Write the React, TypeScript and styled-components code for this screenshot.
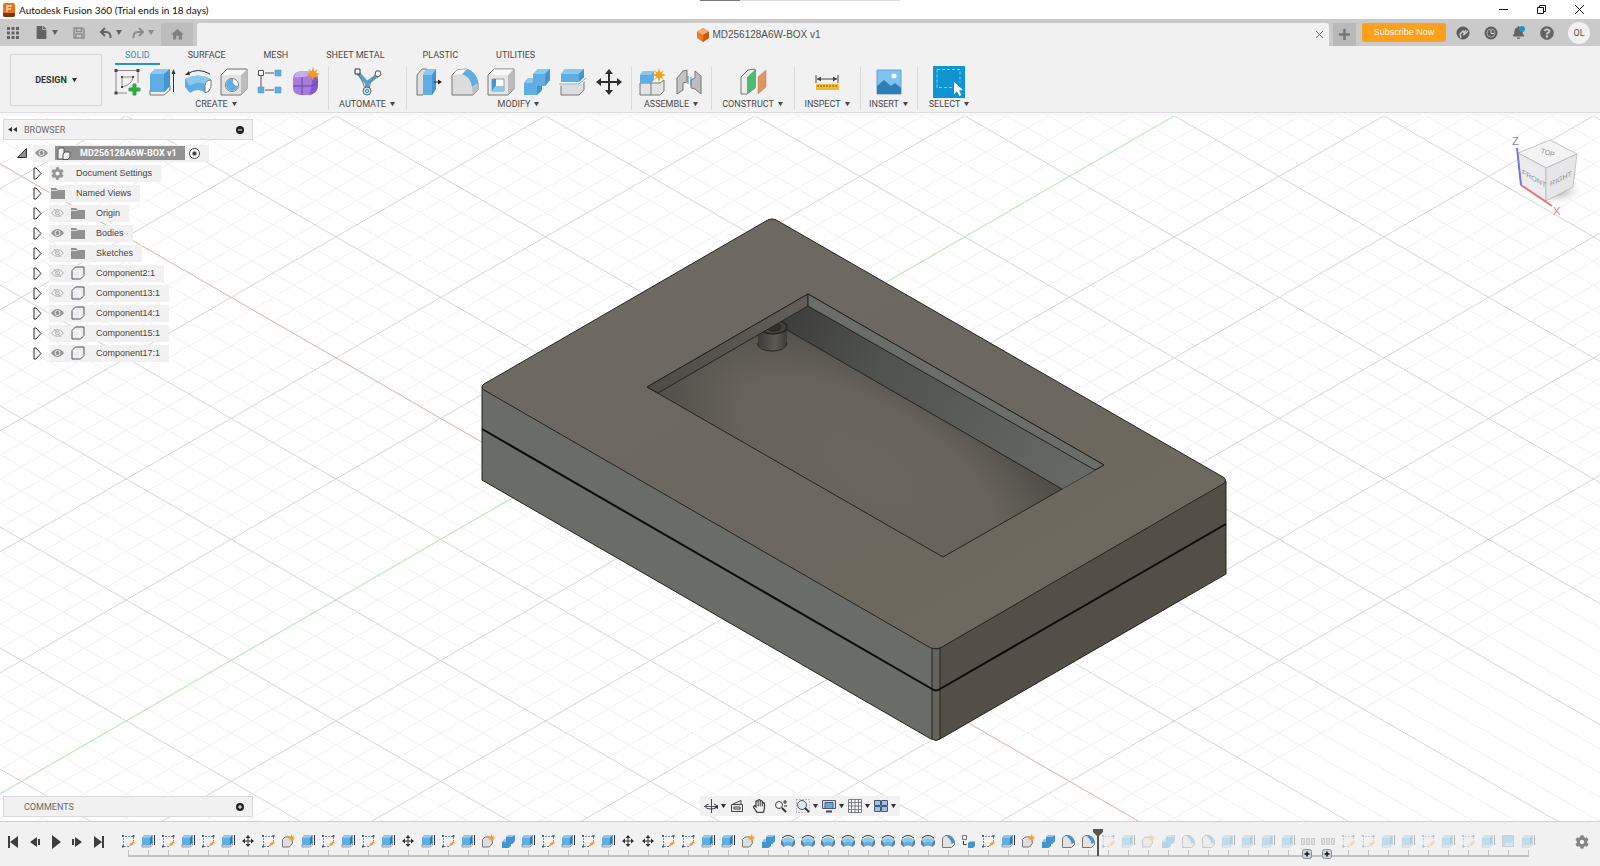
import React from "react";
import styled, { createGlobalStyle, css } from "styled-components";
import { FaCog, FaFile, FaQuestionCircle, FaBell, FaRegHandPaper } from "react-icons/fa";
import { MdHome } from "react-icons/md";

const GlobalStyle = createGlobalStyle`
  *, *::before, *::after { box-sizing: border-box; }
  body { margin: 0; background: #fff; color: #484848; font: 9px/12px Roboto, "Liberation Sans", sans-serif; }
  button { margin: 0; padding: 0; border: 0; background: none; color: inherit; font: inherit; cursor: pointer; }
  ul { margin: 0; padding: 0; list-style: none; }
  svg { display: block; flex: none; }
`;

const Page = styled.div`
  display: flex;
  flex-direction: column;
  min-height: 100vh;
  overflow: hidden;
`;

/* ---------- Window title bar ---------- */

const TitleBar = styled.header`
  position: relative;
  display: flex;
  align-items: center;
  gap: 4px;
  height: 19px;
  padding-left: 3px;
  background: #fff;
  color: #111;
`;

const EdgeMark = styled.span`
  position: absolute;
  top: 0;
  left: calc(50% - 100px);
  width: 200px;
  height: 1px;
  background: linear-gradient(90deg, #777 40px, #ddd 40px);
`;

const WindowTitle = styled.h1`
  flex: 1;
  margin: 0;
  font: 400 10px/18px Lato, "Open Sans", sans-serif;
`;

const WindowControls = styled.div`
  display: flex;
  padding-right: 2px;
`;

const WindowButton = styled.button`
  display: flex;
  align-items: center;
  justify-content: center;
  width: 38px;
  height: 17px;
`;

/* ---------- Document tab bar ---------- */

const TabBar = styled.div`
  display: flex;
  align-items: flex-end;
  height: 27px;
  background: #cacaca;
  color: #636363;
`;

const QuickAccess = styled.div`
  display: flex;
  align-items: center;
  width: 161px;
  height: 27px;
  padding-left: 7px;
`;

const QuickButton = styled.button<{ $gap?: number; $dim?: boolean }>`
  display: flex;
  align-items: center;
  gap: 4px;
  margin-right: ${(p) => p.$gap ?? 0}px;
  opacity: ${(p) => (p.$dim ? 0.6 : 1)};
`;

const HomeTab = styled.button`
  display: flex;
  align-items: center;
  justify-content: center;
  width: 32px;
  height: 23px;
  margin-right: 4px;
  background: #bcbcbc;
  color: #808080;
`;

const DocumentTab = styled.div`
  display: flex;
  flex: 1;
  align-items: center;
  height: 23px;
  padding-left: 12px;
  border-radius: 3px 3px 0 0;
  background: #f1f1f1;
`;

const DocumentName = styled.span`
  display: flex;
  flex: 1;
  align-items: center;
  justify-content: center;
  gap: 3px;
  font: 10px/23px "Liberation Sans", Arial, sans-serif;
  color: #505050;
`;

const CloseTab = styled.button`
  display: flex;
  align-items: center;
  justify-content: center;
  width: 20px;
  height: 23px;
`;

const NewTab = styled(CloseTab)`
  width: 23px;
  margin: 0 6px 0 4px;
  background: #b9b9b9;
`;

const SubscribeButton = styled.button`
  align-self: center;
  width: 84px;
  height: 19px;
  border-radius: 2px;
  background: #fba11c;
  color: #fff8e8;
  font: 9px/19px "Liberation Sans", Arial, sans-serif;
`;

const AccountArea = styled.div`
  display: flex;
  align-items: center;
  align-self: center;
  gap: 14px;
  padding: 0 10px;
`;

const RoundButton = styled.button`
  position: relative;
  display: flex;
  width: 14px;
  height: 14px;
`;

const NewsDot = styled.i`
  position: absolute;
  top: 0;
  right: 1px;
  width: 6px;
  height: 6px;
  border-radius: 50%;
  background: #1c93d2;
`;

const Avatar = styled.button`
  width: 22px;
  height: 22px;
  border-radius: 50%;
  background: #f1f1f1;
  color: #555;
  text-align: center;
`;

/* ---------- Ribbon ---------- */

const Ribbon = styled.div`
  display: flex;
  height: 70px;
  border-bottom: 3px solid #f8f8f8;
  background: #f1f1f1;
  box-shadow: inset 0 -1px 0 #dcdcdc;
`;

const WorkspaceButton = styled.button`
  width: 92px;
  height: 52px;
  margin: 8px 2px 0 10px;
  border: 1px solid #d6d6d6;
  border-radius: 2px;
  box-shadow: 0 0 1px #ccc;
  color: #333;
  font-weight: 700;
`;

const RibbonBody = styled.div`
  display: flex;
  flex: 1;
  flex-direction: column;
`;

const RibbonTabs = styled.nav`
  display: flex;
  gap: 18px;
  padding-left: 11px;
`;

const RibbonTab = styled.button<{ $active?: boolean }>`
  height: 19px;
  padding: 1px 10px 0;
  border-bottom: 2px solid transparent;
  ${(p) => p.$active && css`
    border-color: #2793c1;
    color: #2b90be;
  `}
`;

const RibbonGroups = styled.div`
  display: flex;
  padding-top: 2px;
`;

const RibbonGroup = styled.section<{ $width: number }>`
  display: flex;
  flex-direction: column;
  align-items: center;
  width: ${(p) => p.$width}px;
  height: 43px;
  & + & { box-shadow: inset 1px 0 0 #dadada; }
`;

const ToolRow = styled.div`
  display: flex;
  gap: 4px;
  height: 33px;
`;

const ToolButton = styled.button<{ $selected?: boolean }>`
  display: flex;
  align-items: center;
  justify-content: center;
  width: 32px;
  height: 32px;
  margin-top: -1px;
  background: ${(p) => (p.$selected ? "#0e93d3" : "none")};
`;

const MenuLabel = styled.button`
  display: flex;
  align-items: center;
  gap: 4px;
  white-space: nowrap;
`;

const WorkspaceLabel = styled.span`
  display: flex;
  align-items: center;
  justify-content: center;
  gap: 5px;
`;

/* ---------- Viewport and its overlays ---------- */

const Viewport = styled.main`
  position: relative;
  flex: 1;
  min-height: 420px;
  background: #fff;
`;

const Scene = styled.svg`
  position: absolute;
  inset: 0;
  width: 100%;
  height: 100%;
`;

const BrowserPanel = styled.aside`
  position: absolute;
  top: 3px;
  left: 3px;
  width: 250px;
`;

const PanelBar = styled.div`
  display: flex;
  align-items: center;
  height: 21px;
  padding: 0 8px 0 4px;
  border: 1px solid #dadada;
  background: #f1f1f1;
  color: #686868;
`;

const PanelTitle = styled.span<{ $indent: number }>`
  flex: 1;
  padding-left: ${(p) => p.$indent}px;
`;

const CommentsPanel = styled(PanelBar)`
  position: absolute;
  bottom: 4px;
  left: 3px;
  width: 250px;
`;

const Tree = styled.ul`
  padding-top: 3px;
`;

const TreeRow = styled.li<{ $root?: boolean }>`
  display: flex;
  align-items: center;
  gap: 5px;
  height: 20px;
  padding-left: ${(p) => (p.$root ? 12 : 28)}px;
`;

const Expander = styled.button`
  display: flex;
  align-items: center;
  justify-content: center;
  width: 13px;
  height: 16px;
`;

const RowBody = styled.div`
  display: flex;
  align-items: center;
  height: 17px;
  padding: 0 9px 0 2px;
  background: rgba(240, 240, 240, 0.93);
  color: #444;
`;

const IconCell = styled.button`
  display: flex;
  align-items: center;
  width: 20px;
  color: #969696;
`;

const RowText = styled.span`
  padding-left: 5px;
  font: 9px/16px "Liberation Sans", Arial, sans-serif;
`;

const RootTag = styled.span`
  display: flex;
  align-items: center;
  gap: 9px;
  height: 14px;
  margin-right: 4px;
  padding: 0 8px 0 2px;
  background: #929292;
  color: #fff;
  font: 700 9px/14px Roboto, "Liberation Sans", sans-serif;
`;

const ActiveRadio = styled.input`
  appearance: none;
  width: 11px;
  height: 11px;
  margin: 0;
  border: 1px solid #444;
  border-radius: 50%;
  background: radial-gradient(circle, #333 0 1px, #fff 3px);
`;

const CubeHolder = styled.div`
  position: absolute;
  top: 16px;
  right: 12px;
`;

const NavBar = styled.div`
  position: absolute;
  bottom: 5px;
  left: 50%;
  display: flex;
  align-items: center;
  height: 20px;
  padding-left: 4px;
  background: #f1f1f1;
  color: #333;
  transform: translateX(-50%);
`;

const NavButton = styled.button<{ $menu?: boolean }>`
  display: flex;
  align-items: center;
  gap: 3px;
  width: ${(p) => (p.$menu ? 26 : 22)}px;
`;

/* ---------- Timeline ---------- */

const TimelineBar = styled.footer`
  display: flex;
  align-items: flex-start;
  height: 45px;
  padding-left: 4px;
  border-top: 1px solid #cfcfcf;
  background: #f1f1f1;
`;

const Playback = styled.div`
  display: flex;
  gap: 1px;
  margin: 12px 10px 0 0;
`;

const PlayButton = styled.button`
  display: flex;
  align-items: center;
  justify-content: center;
  width: 20px;
  height: 16px;
  color: #3d3d3d;
`;

const Track = styled.div`
  padding-top: 12px;
`;

const Steps = styled.ul`
  display: flex;
`;

const Step = styled.li`
  position: relative;
  width: 20px;
  height: 16px;
`;

const StepButton = styled.button<{ $dim: boolean }>`
  display: flex;
  justify-content: center;
  width: 20px;
  opacity: ${(p) => (p.$dim ? 0.32 : 1)};
`;

const Rail = styled.div`
  height: 7px;
  margin: 0 9px 0 10px;
  border-bottom: 2px solid #c2c2c2;
  background: repeating-linear-gradient(90deg, #c2c2c2 0 1px, transparent 1px 20px);
`;

const Marker = styled.svg`
  position: absolute;
  top: -6px;
  left: -5px;
`;

const GroupBadge = styled.svg`
  position: absolute;
  top: 15px;
  left: 4px;
`;

const SettingsButton = styled.button`
  display: flex;
  margin: 13px 11px 0 auto;
  color: #858585;
`;

/* ---------- Drawings ---------- */

const BLUE = "#5fade3";
const DEEP = "#4394d0";
const PALE = "#8cc7ee";
const EDGE = "#777";

const star = "M0-7 1.4-2.6 5-5 2.7-1.4 7 0 2.7 1.4 5 5 1.4 2.6 0 7-1.4 2.6-5 5-2.7 1.4-7 0-2.7-1.4-5-5-1.4-2.6Z";

const toolArt: Record<string, React.ReactNode> = {
  sketch: (
    <>
      <path d="M4 25V2.500H26V15M4 25H15" fill="none" stroke="#8a8a8a" />
      <path d="M10 19V9h11q-1 8-11 10Z" fill="none" stroke="#8a8a8a" />
      <path d="M2.500 1h3v3h-3zM24.500 1h3v3h-3zM2.500 23.500h3v3h-3zM9 8h2v2H9zM20 8h2v2h-2zM9 18h2v2H9z" fill="#444" />
      <path d="M21 16h3v4h4v3h-4v4h-3v-4h-4v-3h4z" fill="#36a545" stroke="#36a545" />
    </>
  ),
  extrude: (
    <>
      <path d="M2 22v5h14l6-5v-4" fill="#eee" stroke={EDGE} />
      <path d="M2 6 7 1H22V18L16 24H2Z" fill={BLUE} />
      <path d="M2 6 7 1H22L16 6Z" fill={PALE} />
      <path d="M16 6 22 1V18L16 24Z" fill={DEEP} />
      <path d="M25.500 24V4" stroke="#333" />
      <path d="m25.500 1 2 5h-4z" fill="#333" />
    </>
  ),
  revolve: (
    <>
      <path d="M1 11Q14 4 27 11L22 18V25Q14 19 6 25L1 19Z" fill={BLUE} />
      <path d="M1 11Q14 4 27 11L22 17Q14 12 6 18Z" fill={PALE} />
      <path d="M21 17Q22 12 27 12V19Q26 24 21 25Z" fill="#fff" stroke={EDGE} />
      <path d="M3 6Q14-1 26 6" fill="none" stroke="#333" />
      <path d="m1 7 4-4 1 4z" fill="#333" />
    </>
  ),
  hole: (
    <>
      <path d="M1 7 7 1H27V21L21 27H1Z" fill="#e2e2e2" stroke={EDGE} />
      <path d="M21 7V27L27 21V1Z" fill="#bdbdbd" />
      <path d="M2 7 7 2H26L21 7Z" fill="#f6f6f6" />
      <circle cx="12" cy="17" r="6.500" fill="#fff" stroke={EDGE} />
      <path d="M13 11A6 6 0 1 0 18 18Q12 18 13 11Z" fill={BLUE} />
    </>
  ),
  pattern: (
    <>
      <path d="M5 8V19M9 5H18M9 22H18" stroke="#555" />
      <path d="M2.500 2.500h5v5h-5z" fill="#fff" stroke="#555" />
      <path d="M19 2h6v6h-6zM2 19h6v6H2zM19 19h6v6h-6z" fill={BLUE} stroke={DEEP} strokeWidth=".5" />
    </>
  ),
  form: (
    <>
      <path d="M1 11Q1 4 9 3H20Q26 4 26 11V18Q25 26 17 27H8Q1 26 1 20Z" fill="#a77be0" />
      <path d="M2 10Q3 4 9 3H20Q17 9 10 9Q4 9 2 10Z" fill="#c9acf0" />
      <path d="M20 9Q26 8 26 11V18Q25 26 17 27Q20 20 20 9Z" fill="#8458c4" />
      <path d="M10 9V27M1 18H19Q24 17 26 13" fill="none" stroke="#6b41a8" />
      <path d={star} fill="#f59a1d" transform="translate(21 6)" />
    </>
  ),
  automate: (
    <>
      <path d="M4 4 14 15 25 7M14 15V23" fill="none" stroke="#5d9fc6" strokeWidth="4" />
      <path d="M6 7q5 9 6 14M22 8q-6 6-6 13" fill="none" stroke="#6e7b85" />
      <path d="M2 1h5v5H2z" fill="#fff" stroke="#333" />
      <path d="m22 7 1-4h4l1 4-3 2z" fill="#fff" stroke="#555" />
      <circle cx="14" cy="23" r="4" fill="#cfe3ef" stroke="#4d6f85" />
      <circle cx="14" cy="23" r="1.500" fill="#fff" stroke="#4d6f85" />
    </>
  ),
  press: (
    <>
      <path d="M2 7 7 1H12V21L8 27H2Z" fill="#ddd" stroke={EDGE} />
      <path d="M8 7 12 1H21V21L17 27H8Z" fill={BLUE} />
      <path d="M8 7 12 1H21L17 7Z" fill={PALE} />
      <path d="M17 7 21 1V21L17 27Z" fill={DEEP} />
      <path d="M19 14H25" stroke="#222" />
      <path d="m27 14-4-2.500v5z" fill="#222" />
    </>
  ),
  fillet: (
    <>
      <path d="M1 7 6 2 15 1Q25 4 27 16V22L22 27H1Z" fill="#dcdcdc" stroke={EDGE} />
      <path d="M11 6 16 1Q26 4 27 15L21 19Q20 9 11 6Z" fill={BLUE} />
      <path d="M2 7 6 2 16 1 11 6Z" fill="#f8f8f8" />
      <path d="M21 20 27 16V22L22 27Z" fill="#bdbdbd" />
    </>
  ),
  shell: (
    <>
      <path d="M1 7 7 1H27V21L21 27H1Z" fill="#e6e6e6" stroke={EDGE} />
      <path d="M21 7 27 1V21L21 27Z" fill="#bbb" />
      <path d="M2 7 7 1.500H26L21 7Z" fill="#f8f8f8" />
      <path d="M5 11H17V23H5Z" fill="#fff" stroke="#999" />
      <path d="M5 11H9V18L5 23Z" fill={DEEP} />
      <path d="M9 18H17V23H5Z" fill={PALE} />
    </>
  ),
  combine: (
    <>
      <path d="M10 6 15 1H27V12L22 18H19V22L14 27H1V15L5 10H10Z" fill={BLUE} />
      <path d="M10 6 15 1H27L22 6ZM1 15 5 10H10V15Z" fill={PALE} />
      <path d="M22 6 27 1V12L22 18ZM14 18H19V22L14 27Z" fill={DEEP} />
    </>
  ),
  split: (
    <>
      <path d="M2 17H20L25 13V22L20 27H2Z" fill="#dedede" stroke={EDGE} />
      <path d="M2 6 6 1H25V10L20 14H2Z" fill={BLUE} />
      <path d="M2 6 6 1H25L20 6Z" fill={PALE} />
      <path d="M20 6 25 1V10L20 14Z" fill={DEEP} />
      <path d="M0 16H20L27 10" fill="none" stroke="#fff" strokeWidth="3" />
      <path d="M0 16H20L27 10" fill="none" stroke={BLUE} />
    </>
  ),
  move: (
    <>
      <path d="M14 4V24M4 14H24" stroke="#2d2d2d" strokeWidth="2" />
      <path d="m14 1 4 5h-8zM14 27l-4-5h8zM1 14l5-4v8zM27 14l-5 4v-8z" fill="#2d2d2d" />
    </>
  ),
  component: (
    <>
      <path d="M1 15H21L25 12V23L21 27H1Z" fill="#e3e3e3" stroke={EDGE} />
      <path d="M12 15V27" stroke={EDGE} />
      <path d="M1 7 4 3H15V12L12 15H1Z" fill={BLUE} />
      <path d="M1 7 4 3H15L12 7Z" fill={PALE} />
      <path d={star} fill="#eba21e" transform="translate(20 7)" />
    </>
  ),
  joint: (
    <>
      <path d="M2 10 8 3 12 2V14L8 15V22L2 26Z" fill="#c4c4c4" stroke={EDGE} />
      <path d="M16 12 20 10V3L26 8V26L20 21 16 20Z" fill="#bcbcbc" stroke={EDGE} />
      <path d="M13 8V16M16 9V17" stroke="#4193cd" />
    </>
  ),
  plane: (
    <>
      <path d="M2 9 9 2 16 1V20L8 26H2Z" fill="#ededed" stroke={EDGE} />
      <path d="M8 9 17 1V19L8 26Z" fill="#4dbb77" />
      <path d="M19 9 27 2V19L19 26Z" fill="#df9566" stroke="#c77d50" strokeWidth=".5" />
    </>
  ),
  measure: (
    <>
      <path d="M3 7V15M25 7V15M4 11H24" stroke="#444" />
      <path d="m4 11 4-2.500v5zM24 11l-4-2.500v5z" fill="#444" />
      <path d="M3 16H26V22H3Z" fill="#f2b93b" />
      <path d="M5 17v2M8 17v2M11 17v2M14 17v2M17 17v2M20 17v2M23 17v2" stroke="#7d5a12" />
    </>
  ),
  insert: (
    <>
      <path d="M2 2H26V26H2Z" fill="#7fc3f2" stroke="#6aa2c6" />
      <circle cx="19" cy="8" r="2.500" fill="#fff" />
      <path d="M2 18 9 12 16 18 20 15 26 20V26H2Z" fill="#2e7fb5" />
    </>
  ),
  select: (
    <>
      <path d="M2 1.500H25V15M2 1.500V19.500H18" fill="none" stroke="#7fd6f6" strokeDasharray="3 2" />
      <path d="M19 14 28 22 24 22.500 26.500 27 24.500 28 22 23.500 19 26Z" fill="#fff" />
    </>
  ),
};

function ToolArt({ name, size = 28 }: { name: string; size?: number }) {
  return <svg width={size} height={size} viewBox="0 0 28 28" overflow="visible" aria-hidden="true">{toolArt[name]}</svg>;
}

const stepArt: Record<string, React.ReactNode> = {
  S: (
    <>
      <path d="M2.500 1V12.500H8M1 2.500H12.500V7" fill="none" stroke="#8b8b8b" strokeDasharray="2 1" />
      <path d="M1 1h2v2H1zM11.500 1h2v2h-2zM1 11.500h2v2H1z" fill="#2f6a97" />
      <path d="m8 12 1-2.500 3.500-2.500 1.500 1.500L11 11.500z" fill="#eba14c" />
    </>
  ),
  E: (
    <>
      <path d="M1 10V13H9L11.500 11V8" fill="#eee" stroke="#777" strokeWidth=".7" />
      <path d="M1 4 3.500 1H11.500V8.500L9 11.500H1Z" fill={BLUE} />
      <path d="M1 4 3.500 1H11.500L9 4Z" fill={PALE} />
      <path d="M9 4 11.500 1V8.500L9 11.500Z" fill="#2f7db8" />
      <path d="M13.500 1V11" stroke="#333" />
    </>
  ),
  M: (
    <>
      <path d="M7 2V12M2 7H12" stroke="#333" />
      <path d="m7 1 2.500 3h-5zM7 13 4.500 10h5zM1 7l3-2.500v5zM13 7l-3 2.500v-5z" fill="#333" />
    </>
  ),
  N: (
    <>
      <path d="M1.500 5.500 4 3H9Q11.500 5 11.500 9L8.500 13H1.500Z" fill="#dedede" stroke="#777" />
      <path d={star} fill="#f5a22d" transform="translate(10.500 4) scale(.6)" />
    </>
  ),
  J: (
    <>
      <path d="M5 3 7.500 1H14V7L11.500 10H10V12L7.500 14H1V8L3 5.500H5Z" fill={DEEP} />
      <path d="M5 3 7.500 1H14L11.500 3ZM1 8 3 5.500H5V8Z" fill={PALE} />
    </>
  ),
  R: (
    <>
      <path d="M0 6Q7 1 14 6V10L11.500 13Q7 10 2.500 13L0 10Z" fill={BLUE} />
      <path d="M0 6Q7 1 14 6L11 9Q7 6 3 9Z" fill={PALE} />
      <path d="M1 4Q7-1 13 4" fill="none" stroke="#333" />
      <path d="M11.500 9 14 6V10L11.500 13ZM2.500 13V9L0 6V10Z" fill="#777" />
    </>
  ),
  C: (
    <>
      <path d="M1.500 4 4 1.500H7Q13 3 13.500 9V10.500L10.500 13.500H1.500Z" fill="#e2e2e2" stroke="#777" />
      <path d="M6 3 8 1Q13 3 13.500 8.500L10.500 10Q10 5 6 3Z" fill={DEEP} />
    </>
  ),
  X: (
    <>
      <path d="M1.500 1.500h4v4h-4z" fill="#eee" stroke="#777" />
      <path d="M2.500 7v3.500h3" fill="none" stroke="#333" />
      <path d="M7 9 9 7.500H14V12L12 14H7Z" fill={DEEP} />
    </>
  ),
  P: <path d="M.5 4.500h3v6h-3zM5.500 4.500h3v6h-3zM10.500 4.500h3v6h-3z" fill="#bbb" stroke="#777" />,
  I: (
    <>
      <path d="M1.500 1.500H12.500V12.500H1.500Z" fill="#58aae2" stroke="#888" />
      <path d="M2 12 6 8 9 10 12 7V12Z" fill="#9fd0f0" />
    </>
  ),
};

const stepNames: Record<string, string> = {
  S: "Sketch", E: "Extrude", M: "Move", N: "New component", J: "Combine",
  R: "Revolve", C: "Fillet", X: "Align", P: "Pattern", I: "Canvas",
};

const STEPS = "SESESEMSNESESEMESENJES" + "ESEMMSSEENJRRRRRRRRCXSENJCC" + "SENJCCEEEEPPSSEESESEIE";
const MARKER_AT = 49;

function Eye({ hidden }: { hidden?: boolean }) {
  return hidden ? (
    <svg width="13" height="10" viewBox="0 0 13 10">
      <path d="M.5 5Q6.500-2 12.500 5 6.500 12 .5 5ZM3 1 10 9" fill="none" stroke="#b2b2b2" />
      <circle cx="6.500" cy="5" r="2" fill="none" stroke="#b2b2b2" />
    </svg>
  ) : (
    <svg width="13" height="10" viewBox="0 0 13 10">
      <path d="M0 5Q6.500-3 13 5 6.500 13 0 5Z" fill="#949494" />
      <circle cx="6.500" cy="5" r="2.500" fill="#949494" stroke="#eee" />
    </svg>
  );
}

function BodyIcon() {
  return (
    <svg width="14" height="14" viewBox="0 0 14 14">
      <path d="M1 4.500 4.500 1H13V9.500L9.500 13H1Z" fill="#ebebf1" stroke="#555" strokeLinejoin="round" />
      <path d="M2 5H9V12" fill="none" stroke="#fff" />
    </svg>
  );
}

const gridSteps = Array.from({ length: 80 }, (_, i) => i - 35);
const PERIOD = 209.6;
const SLOPE = 0.5774;

function gridPath(keep: (i: number) => boolean) {
  return gridSteps
    .filter(keep)
    .map((i) => {
      const down = -83 + (i * PERIOD) / 5;
      const up = 1174 + ((i - 15) * PERIOD) / 5;
      const run = 710 / SLOPE;
      return `M${down} 116L${down + run} 826M${up} 116L${up - run} 826`;
    })
    .join("");
}

function Model() {
  return (
    <Scene viewBox="0 116 1600 705" preserveAspectRatio="xMidYMid slice" role="img" aria-label="Enclosure model">
      <defs>
        <linearGradient id="top" x1="0" y1="0" x2="1" y2="1">
          <stop offset="0" stopColor="#6e6a61" />
          <stop offset=".5" stopColor="#6c675f" />
          <stop offset="1" stopColor="#6e6a5e" />
        </linearGradient>
        <radialGradient id="floor" gradientUnits="userSpaceOnUse" cx="0" cy="0" r="1" gradientTransform="translate(868 470) rotate(31) scale(265 118)">
          <stop offset="0" stopColor="#6b665e" />
          <stop offset=".55" stopColor="#67635a" />
          <stop offset="1" stopColor="#4b4943" />
        </radialGradient>
        <linearGradient id="wall" gradientUnits="userSpaceOnUse" x1="790" y1="320" x2="1090" y2="480">
          <stop offset="0" stopColor="#3f403d" />
          <stop offset=".3" stopColor="#50524e" />
          <stop offset="1" stopColor="#686a66" />
        </linearGradient>
        <linearGradient id="lip" gradientUnits="userSpaceOnUse" x1="647" y1="387" x2="808" y2="300">
          <stop offset="0" stopColor="#4e4b45" />
          <stop offset="1" stopColor="#625e57" />
        </linearGradient>
        <linearGradient id="post">
          <stop offset="0" stopColor="#3c3b37" />
          <stop offset=".6" stopColor="#5b5952" />
          <stop offset="1" stopColor="#3c3b37" />
        </linearGradient>
      </defs>
      <path d={gridPath((i) => i % 5 !== 0)} stroke="#f1f1f1" fill="none" />
      <path d={gridPath((i) => i % 5 === 0)} stroke="#d6d6d6" fill="none" />
      <path d="M-83 116 1147 826" stroke="#efb9b9" />
      <path d="M1174 116-56 826" stroke="#b4f2b4" />
      <g stroke="#24231f" strokeLinejoin="round">
        <path d="M482 387V480L931 739H935V648Z" fill="#6a6c67" />
        <path d="M1226 481V574L940 739H935V648Z" fill="#534e46" />
        <path d="M766 221Q772 217 778 221L1223 477Q1228 480 1223 484L942 647Q935 651 929 647L484 390Q480 387 484 384Z" fill="url(#top)" />
        <path d="M932 648V739Q936 742 940 739V648Q936 650 932 648Z" fill="#64645e" />
        <path d="M482 429 932 689Q936 692 940 689L1226 524" fill="none" stroke="#0c0c0b" strokeWidth="2" />
        <path d="M808 294 1104 465 943 557 647 387Z" fill="url(#floor)" />
        <path d="M808 306 1095 470 1062 489 787 330 774 326Z" fill="url(#wall)" stroke="none" />
        <path d="M787 330 1062 489" />
        <path d="M758 328V345Q772 357 787 345V328Z" fill="url(#post)" stroke="none" />
        <path d="M757 343Q759 351 772 351T787 343" fill="none" />
        <ellipse cx="773" cy="327" rx="14" ry="7" fill="#42413d" strokeWidth="1.500" />
        <ellipse cx="774" cy="327" rx="7" ry="4" fill="#32312e" />
        <path d="M808 294V306L658 393 647 387Z" fill="url(#lip)" />
        <path d="M808 294 1104 465 1095 470 808 306Z" fill="#6b6d69" />
      </g>
    </Scene>
  );
}

function ViewCube() {
  return (
    <svg width="78" height="92" viewBox="1510 132 78 92" role="img" aria-label="View cube" fontFamily="Liberation Sans, Arial, sans-serif">
      <defs>
        <radialGradient id="cubeShade">
          <stop offset="0" stopColor="#9a9a9a" />
          <stop offset="1" stopColor="#fff" stopOpacity="0" />
        </radialGradient>
      </defs>
      <ellipse cx="1556" cy="191" rx="30" ry="15" fill="url(#cubeShade)" />
      <g stroke="#b0b0b0" strokeWidth=".7" strokeLinejoin="round">
        <path d="M1518 153 1550 140 1577 154 1546 168Z" fill="#f3f3f3" />
        <path d="M1518 153 1546 168V201L1521 186Z" fill="#ececee" />
        <path d="M1577 154 1546 168V201L1573 187Z" fill="#e6e6e8" />
      </g>
      <path d="M1517 148 1521 185" stroke="#7479d0" strokeWidth="2" />
      <path d="M1521 185 1552 206" stroke="#e27a7a" strokeWidth="2" />
      <g fill="#909093" fontSize="7" textAnchor="middle">
        <text transform="translate(1547 155) rotate(18)">TOP</text>
        <text transform="translate(1534 181) skewY(30)">FRONT</text>
        <text transform="translate(1561 181) skewY(-27)">RIGHT</text>
      </g>
      <text x="1512" y="145" fontSize="11" fill="#7d80c8">Z</text>
      <text x="1553" y="215" fontSize="11" fill="#e88080">X</text>
    </svg>
  );
}

/* ---------- Data ---------- */

const ribbonTabs = ["SOLID", "SURFACE", "MESH", "SHEET METAL", "PLASTIC", "UTILITIES"];

const ribbonGroups: { label: string; width: number; tools: string[] }[] = [
  { label: "CREATE", width: 224, tools: ["sketch", "extrude", "revolve", "hole", "pattern", "form"] },
  { label: "AUTOMATE", width: 78, tools: ["automate"] },
  { label: "MODIFY", width: 225, tools: ["press", "fillet", "shell", "combine", "split", "move"] },
  { label: "ASSEMBLE", width: 80, tools: ["component", "joint"] },
  { label: "CONSTRUCT", width: 83, tools: ["plane"] },
  { label: "INSPECT", width: 66, tools: ["measure"] },
  { label: "INSERT", width: 57, tools: ["insert"] },
  { label: "SELECT", width: 64, tools: ["select"] },
];

type Kind = "settings" | "folder" | "body";
const treeRows: { name: string; kind: Kind; eye?: "on" | "off" }[] = [
  { name: "Document Settings", kind: "settings" },
  { name: "Named Views", kind: "folder" },
  { name: "Origin", kind: "folder", eye: "off" },
  { name: "Bodies", kind: "folder", eye: "on" },
  { name: "Sketches", kind: "folder", eye: "off" },
  { name: "Component2:1", kind: "body", eye: "off" },
  { name: "Component13:1", kind: "body", eye: "off" },
  { name: "Component14:1", kind: "body", eye: "on" },
  { name: "Component15:1", kind: "body", eye: "off" },
  { name: "Component17:1", kind: "body", eye: "on" },
];

const kindIcon: Record<Kind, React.ReactNode> = {
  settings: <FaCog size={13} />,
  folder: (
    <svg width="14" height="12" viewBox="0 0 14 12">
      <path d="M0 1H5L7 3H14V12H0Z" fill="#919191" />
      <path d="M0 3.500H6L8 2" fill="none" stroke="#ddd" />
    </svg>
  ),
  body: <BodyIcon />,
};

const playback: [string, string][] = [
  ["Go to start", "M1 1h2v12H1zM11 1v12L3 7z"],
  ["Step back", "M9 2v10L2 7zM10 4h2v6h-2z"],
  ["Play", "M3 0v14l9-7z"],
  ["Step forward", "M5 2v10l7-5zM2 4h2v6H2z"],
  ["Go to end", "M11 1h2v12h-2zM3 1v12l8-6z"],
];

const navTools: { name: string; menu?: boolean; art: React.ReactNode }[] = [
  { name: "Orbit", menu: true, art: <><path d="M7.500 0V14" stroke="#444" /><path d="M5 5Q1 6 1 7.500 2 10 7 10T13 7.500Q13 6 10 5" fill="none" stroke="#445" /><path d="M0 7.500H14" stroke="#555" /><path d="m10 8 4-2v4z" fill="#333" /></> },
  { name: "Look at", art: <path d="M1.500 5.500h11v7h-11zM3 5l8-3.500V5M4 8h6v2H4z" fill="#e5e5e5" stroke="#444" /> },
  { name: "Pan", art: <FaRegHandPaper size={14} color="#444" /> },
  { name: "Zoom", art: <><circle cx="5" cy="6" r="3.500" fill="#eef4fb" stroke="#444" /><path d="m8 9 4 4" stroke="#333" strokeWidth="2" /><path d="M9 3h4M11 1v4M10 7h3" stroke="#333" /></> },
  { name: "Zoom window", menu: true, art: <><path d="M.5.500h13v13H.5z" fill="none" stroke="#888" strokeDasharray="1 2" /><circle cx="6" cy="6" r="4.500" fill="#dbe9f4" stroke="#556" /><path d="m9 9 4 4" stroke="#333" strokeWidth="2" /></> },
  { name: "Display settings", menu: true, art: <><path d="M.5 1.500h13v8H.5z" fill="#d5dce5" stroke="#556" /><path d="M3 3.500h8v6H3z" fill="#78a0cf" stroke="#3f5f88" /><path d="M4 12.500h6" stroke="#445" strokeWidth="2" /></> },
  { name: "Grid and snaps", menu: true, art: <path d="M.5.500h13v13H.5zM3.500 0v14M7 0v14M10.500 0v14M0 3.500h14M0 7h14M0 10.500h14" fill="#f7f7fa" stroke="#667" strokeWidth=".8" /> },
  { name: "Viewports", menu: true, art: <path d="M.5 1.500h6v5h-6zM7.500 1.500h6v5h-6zM.5 7.500h6v5h-6zM7.500 7.500h6v5h-6z" fill="#a3bfe0" stroke="#40597d" /> },
];

/* ---------- Application ---------- */

function Caret({ size = 5 }: { size?: number }) {
  return <svg width={size} height={size} viewBox="0 0 6 6"><path d="M0 0h6L3 5z" fill="currentColor" /></svg>;
}

function Header() {
  return (
    <>
      <TitleBar>
        <EdgeMark />
        <svg width="12" height="14" viewBox="0 0 12 14">
          <rect width="12" height="14" rx="2" fill="#e8731c" />
          <path d="M0 10H12V12Q12 14 10 14H2Q0 14 0 12Z" fill="#7e3410" />
          <path d="M4 9V3H8.500M4 6H8" fill="none" stroke="#ffe2c4" strokeWidth="1.500" />
        </svg>
        <WindowTitle>Autodesk Fusion 360 (Trial ends in 18 days)</WindowTitle>
        <WindowControls>
          <WindowButton aria-label="Minimize"><svg width="9" height="9"><path d="M0 4.500H9" stroke="#111" /></svg></WindowButton>
          <WindowButton aria-label="Restore"><svg width="9" height="9"><path d="M.5 2.500h6v6h-6zM2.500 2.500v-2h6v6h-2" fill="none" stroke="#111" /></svg></WindowButton>
          <WindowButton aria-label="Close"><svg width="9" height="9"><path d="m0 0 9 9M9 0 0 9" stroke="#111" /></svg></WindowButton>
        </WindowControls>
      </TitleBar>
      <TabBar>
        <QuickAccess>
          <QuickButton aria-label="Data panel" $gap={16}>
            <svg width="12" height="12"><path d="M0 0h3v3H0zM4.500 0h3v3h-3zM9 0h3v3H9zM0 4.500h3v3H0zM4.500 4.500h3v3h-3zM9 4.500h3v3H9zM0 9h3v3H0zM4.500 9h3v3h-3zM9 9h3v3H9z" fill="currentColor" /></svg>
          </QuickButton>
          <QuickButton aria-label="File" $gap={15}><FaFile size={13} /><Caret size={6} /></QuickButton>
          <QuickButton aria-label="Save" $gap={15} $dim>
            <svg width="12" height="12"><path d="M1 1H9.500L11 2.500V11H1ZM3.500 1V4.500H8.500V1M3 11V7H9V11" fill="none" stroke="currentColor" strokeWidth="1.500" /></svg>
          </QuickButton>
          <QuickButton aria-label="Undo" $gap={10}>
            <svg width="12" height="12"><path d="M1 5H6Q11 5 10.500 11M5 1 1 5 5 9" fill="none" stroke="currentColor" strokeWidth="2" /></svg><Caret size={6} />
          </QuickButton>
          <QuickButton aria-label="Redo" $dim>
            <svg width="12" height="12"><path d="M11 5H6Q1 5 1.500 11M7 1 11 5 7 9" fill="none" stroke="currentColor" strokeWidth="2" /></svg><Caret size={6} />
          </QuickButton>
        </QuickAccess>
        <HomeTab aria-label="Home"><MdHome size={15} /></HomeTab>
        <DocumentTab>
          <DocumentName>
            <svg width="12" height="14" viewBox="0 0 12 14">
              <path d="M6 0 12 3.500V10L6 14 0 10V3.500Z" fill="#ec7b27" />
              <path d="M6 0 12 3.500 6 7 0 3.500Z" fill="#f7ac6b" />
              <path d="M6 7 12 3.500V10L6 14Z" fill="#c95a12" />
            </svg>
            MD256128A6W-BOX v1
          </DocumentName>
          <CloseTab aria-label="Close document"><svg width="7" height="7"><path d="m0 0 7 7M7 0 0 7" stroke="#666" /></svg></CloseTab>
        </DocumentTab>
        <NewTab aria-label="New document"><svg width="11" height="11"><path d="M5.500 0V11M0 5.500H11" stroke="#757575" strokeWidth="2.500" /></svg></NewTab>
        <SubscribeButton>Subscribe Now</SubscribeButton>
        <AccountArea>
          <RoundButton aria-label="Extensions">
            <svg width="14" height="14"><circle cx="7" cy="7" r="6.500" fill="#5b5b5b" /><path d="M5 12 4 8 7 5 8 7 10 4M7 9 9 8 12 5" fill="none" stroke="#cacaca" strokeWidth="1.500" /></svg>
          </RoundButton>
          <RoundButton aria-label="Job status">
            <svg width="14" height="14"><circle cx="7" cy="7" r="6.500" fill="#5b5b5b" /><circle cx="7" cy="7" r="4" fill="none" stroke="#aaa" /><path d="M7 4V7.500H10" fill="none" stroke="#ddd" /></svg>
          </RoundButton>
          <RoundButton aria-label="Notifications"><FaBell size={13} /><NewsDot /></RoundButton>
          <RoundButton aria-label="Help"><FaQuestionCircle size={14} /></RoundButton>
          <Avatar aria-label="Account">OL</Avatar>
        </AccountArea>
      </TabBar>
      <Ribbon>
        <WorkspaceButton><WorkspaceLabel>DESIGN<Caret /></WorkspaceLabel></WorkspaceButton>
        <RibbonBody>
          <RibbonTabs>
            {ribbonTabs.map((t, i) => <RibbonTab key={t} $active={i === 0}>{t}</RibbonTab>)}
          </RibbonTabs>
          <RibbonGroups>
            {ribbonGroups.map((g) => (
              <RibbonGroup key={g.label} $width={g.width}>
                <ToolRow>
                  {g.tools.map((t) => (
                    <ToolButton key={t} aria-label={t} $selected={t === "select"}><ToolArt name={t} /></ToolButton>
                  ))}
                </ToolRow>
                <MenuLabel>{g.label}<Caret /></MenuLabel>
              </RibbonGroup>
            ))}
          </RibbonGroups>
        </RibbonBody>
      </Ribbon>
    </>
  );
}

function Browser() {
  return (
    <BrowserPanel>
      <PanelBar>
        <svg width="9" height="7"><path d="M4 1V6L0 3.500ZM9 1V6L5 3.500Z" fill="#333" /></svg>
        <PanelTitle $indent={7}>BROWSER</PanelTitle>
        <svg width="8" height="8"><circle cx="4" cy="4" r="4" fill="#222" /><path d="M2 4H6" stroke="#fff" /></svg>
      </PanelBar>
      <Tree>
        <TreeRow $root>
          <Expander aria-label="Collapse document"><svg width="10" height="10"><path d="M9.500.5V9.500H.5Z" fill="#8f8f8f" stroke="#333" /></svg></Expander>
          <RowBody>
            <IconCell aria-label="Toggle document visibility"><Eye /></IconCell>
            <RootTag>
              <svg width="14" height="13" viewBox="0 0 14 13">
                <path d="M1 2.500 3 1H7V12H1Z" fill="#f4f4f4" stroke="#555" />
                <path d="M6 7 8 5H13V10L11 12.500H6Z" fill="#f4f4f4" stroke="#555" />
              </svg>
              MD256128A6W-BOX v1
            </RootTag>
            <ActiveRadio type="radio" name="active" defaultChecked aria-label="Activate document" />
          </RowBody>
        </TreeRow>
        {treeRows.map((r) => (
          <TreeRow key={r.name}>
            <Expander aria-label={`Expand ${r.name}`}><svg width="9" height="13"><path d="M1 1H3L8 6.500 3 12H1Z" fill="#f4f4f4" stroke="#333" /></svg></Expander>
            <RowBody>
              {r.eye && <IconCell aria-label={`Toggle ${r.name}`}><Eye hidden={r.eye === "off"} /></IconCell>}
              <IconCell as="span">{kindIcon[r.kind]}</IconCell>
              <RowText>{r.name}</RowText>
            </RowBody>
          </TreeRow>
        ))}
      </Tree>
    </BrowserPanel>
  );
}

function Timeline() {
  return (
    <TimelineBar>
      <Playback>
        {playback.map(([label, d]) => (
          <PlayButton key={label} aria-label={label}><svg width="14" height="14"><path d={d} fill="currentColor" /></svg></PlayButton>
        ))}
      </Playback>
      <Track>
        <Steps>
          {STEPS.split("").map((s, i) => (
            <Step key={i}>
              <StepButton $dim={i >= MARKER_AT} aria-label={stepNames[s]}>
                <svg width="14" height="14" viewBox="0 0 14 14">{stepArt[s]}</svg>
              </StepButton>
              {s === "P" && (
                <GroupBadge width="10" height="10" viewBox="0 0 10 10">
                  <rect x=".5" y=".5" width="9" height="9" rx="2" fill="#cfd3da" stroke="#8a8f99" />
                  <path d="M5 2.500V7.500M2.500 5H7.500" stroke="#111" strokeWidth="1.500" />
                </GroupBadge>
              )}
              {i === MARKER_AT && (
                <Marker width="10" height="28" viewBox="0 0 10 28">
                  <path d="M0 1H10V4L6 8V28H4V8L0 4Z" fill="#555" />
                </Marker>
              )}
            </Step>
          ))}
        </Steps>
        <Rail />
      </Track>
      <SettingsButton aria-label="Timeline settings"><FaCog size={14} /></SettingsButton>
    </TimelineBar>
  );
}

export default function App() {
  return (
    <Page>
      <GlobalStyle />
      <Header />
      <Viewport>
        <Model />
        <Browser />
        <CubeHolder><ViewCube /></CubeHolder>
        <CommentsPanel>
          <PanelTitle $indent={16}>COMMENTS</PanelTitle>
          <svg width="8" height="8"><circle cx="4" cy="4" r="4" fill="#222" /><path d="M2 4H6M4 2V6" stroke="#fff" /></svg>
        </CommentsPanel>
        <NavBar>
          {navTools.map((n) => (
            <NavButton key={n.name} aria-label={n.name} $menu={n.menu}>
              <svg width="14" height="14" viewBox="0 0 14 14">{n.art}</svg>
              {n.menu && <Caret />}
            </NavButton>
          ))}
        </NavBar>
      </Viewport>
      <Timeline />
    </Page>
  );
}
